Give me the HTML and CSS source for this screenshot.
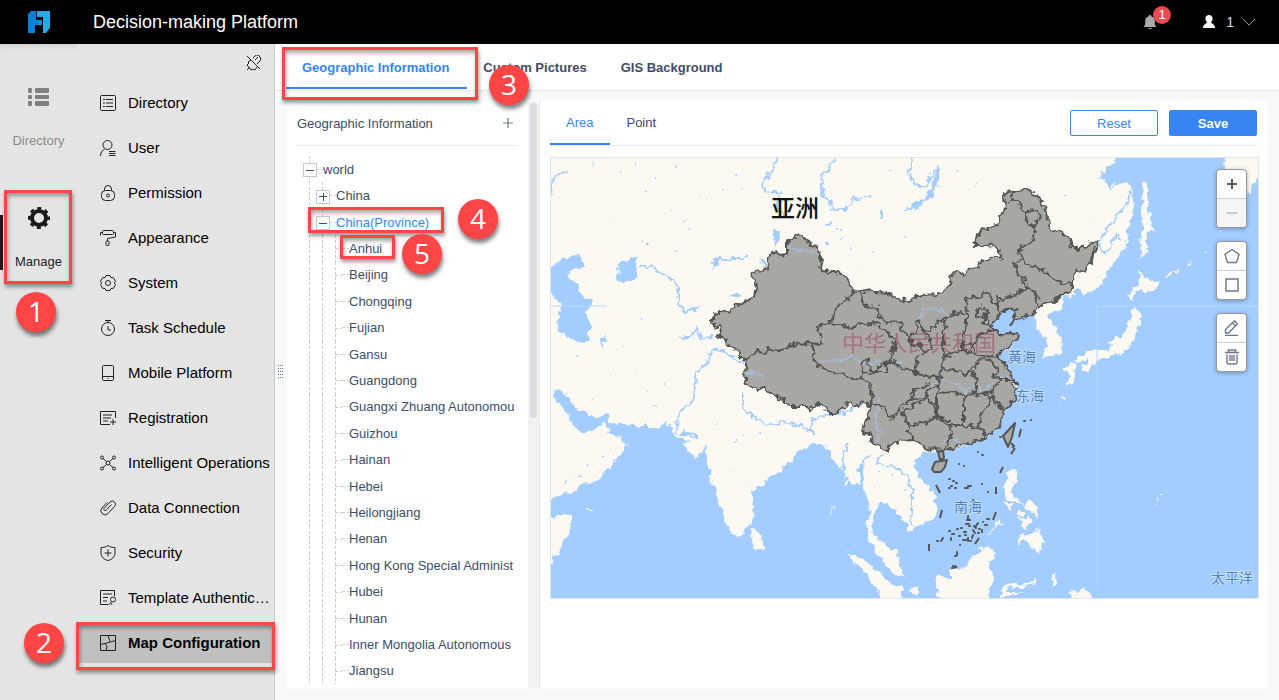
FILE: index.html
```html
<!DOCTYPE html>
<html lang="en">
<head>
    <meta charset="utf-8">
    <meta name="viewport" content="width=device-width, initial-scale=1">
    <title>Decision-making Platform</title>
    <link rel="stylesheet" href="styles.css">
</head>
<body>
    <header class="topbar">
        <svg class="logo" viewBox="0 0 22 22">
            <path d="M3 0h5v9h6v5H7v8H0V3z" fill="#0a7fd6"/>
            <path d="M9 0h13v17l-4 5h-3V6H9z" fill="#27aae1"/>
            <path d="M9 9h5v5l-5 0z" fill="#0a90d8"/>
        </svg>
        <h1>Decision-making Platform</h1>
        <div class="account">
            <button class="bell" aria-label="Messages">
                <svg viewBox="0 0 14 14"><path d="M7 0c.8 0 1.200.5 1.200 1.200C10.500 1.800 11.800 3.500 11.800 6v3.500L13.500 12H.5l1.700-2.500V6c0-2.500 1.300-4.200 3.600-4.800C5.800.5 6.200 0 7 0zM5 13h4l-1 1H6z" fill="#aaa"/></svg>
                <span class="badge">1</span>
            </button>
            <svg class="person" viewBox="0 0 12 14"><path d="M6 0a3.600 3.600 0 0 1 3.600 3.800c0 1.500-.8 2.700-1.600 3.500 0 1.200 4 1.700 4 5.700H0c0-4 4-4.500 4-5.700-.8-.8-1.600-2-1.600-3.500A3.600 3.600 0 0 1 6 0z" fill="#fff"/></svg>
            <span class="user-name">1</span>
            <svg class="chevron" viewBox="0 0 14 8"><path d="M1 1l6 6 6-6" fill="none" stroke="#999"/></svg>
        </div>
    </header>

    <div class="layout">
        <nav class="rail">
            <a href="#" class="rail-item">
                <svg viewBox="0 0 22 20" fill="#808080">
                    <rect x="0" y="0" width="4" height="5" rx="1"/><rect x="7" y="0" width="14" height="5" rx="1"/>
                    <rect x="0" y="7" width="4" height="4" rx="1"/><rect x="7" y="7" width="14" height="4" rx="1"/>
                    <rect x="0" y="13" width="4" height="5" rx="1"/><rect x="7" y="13" width="14" height="5" rx="1"/>
                </svg>
                Directory
            </a>
            <a href="#" class="rail-item active">
                <svg viewBox="0 0 22 22" fill="none" stroke="#1a1a1a">
                    <circle cx="11" cy="11" r="7" stroke-width="4"/>
                    <circle cx="11" cy="11" r="9" stroke-width="4" stroke-dasharray="3.600 3.470" stroke-dashoffset="1.800"/>
                </svg>
                Manage
                <span class="mark mark-manage"></span>
                <span class="step step-1">1</span>
            </a>
        </nav>

        <aside class="menu">
            <button class="pin" aria-label="Unpin menu">
                <svg class="line" viewBox="0 0 16 16"><path d="M1 1l13 13M7 3l2-2a3 3 0 0 1 5 1 3 3 0 0 1 0 4l-3 3M9 5l3-3M5 5L2 7l1 1-2 2 4 5 2-1 2 1 2-3M1 15l3-3"/></svg>
            </button>
            <ul>
                <li><a href="#"><svg class="line" viewBox="0 0 16 16"><rect x=".5" y=".5" width="15" height="15" rx="1"/><path d="M3 4.500h2M6 4.500h7M3 8h2M6 8h7M3 11.500h2M6 11.500h7"/></svg><span>Directory</span></a></li>
                <li><a href="#"><svg class="line" viewBox="0 0 16 16"><circle cx="7.500" cy="5" r="4.500"/><path d="M.5 16c0-3 1.500-5.500 4-6.800M9 11.500h6.500M9 13.500h6.500M9 15.500h6.500"/></svg><span>User</span></a></li>
                <li><a href="#"><svg class="line" viewBox="0 0 16 16"><path d="M4.500 5.500V4a3.500 3.500 0 0 1 7 0v1.500"/><rect x="1.500" y="5.500" width="13" height="10" rx="4"/><circle cx="8" cy="10.500" r="1.500"/></svg><span>Permission</span></a></li>
                <li><a href="#"><svg class="line" viewBox="0 0 16 16"><rect x="2.500" y=".5" width="11" height="4" rx="1"/><path d="M2 2.500H.5v3M13.500 2.500h2V7l-8 1.500V11"/><rect x="6" y="11" width="3" height="4.500" rx="1"/></svg><span>Appearance</span></a></li>
                <li><a href="#"><svg class="line" viewBox="0 0 16 16"><path d="M6 .5h4l1 2 2.500.3 2 3.500L14.300 8l1.200 1.700-2 3.500-2.500.3-1 2H6l-1-2-2.500-.3-2-3.500L1.700 8 .5 6.300l2-3.500L5 2.500z" stroke-linejoin="round"/><circle cx="8" cy="8" r="2.500"/></svg><span>System</span></a></li>
                <li><a href="#"><svg class="line" viewBox="0 0 16 16"><circle cx="8" cy="9" r="6.500"/><path d="M5 .5h6M8 .5v2M8 6v4h3"/></svg><span>Task Schedule</span></a></li>
                <li><a href="#"><svg class="line" viewBox="0 0 16 16"><rect x="2.500" y=".5" width="11" height="15" rx="1"/><path d="M3 11.500h10M7.500 13.500h1"/></svg><span>Mobile Platform</span></a></li>
                <li><a href="#"><svg class="line" viewBox="0 0 16 16"><path d="M15.500 8V1.500H.5v13H10M3 5h9M3 8h8M3 11h5M13 9v6M10 12h6"/></svg><span>Registration</span></a></li>
                <li><a href="#"><svg class="line" viewBox="0 0 16 16"><circle cx="2" cy="2.500" r="1.500"/><circle cx="14" cy="2.500" r="1.500"/><circle cx="2" cy="13.500" r="1.500"/><circle cx="14" cy="13.500" r="1.500"/><circle cx="8" cy="8" r="2"/><path d="M3 3.500l3.500 3M13 3.500l-3.500 3M3 12.500l3.500-3M13 12.500l-3.500-3"/></svg><span>Intelligent Operations</span></a></li>
                <li><a href="#"><svg class="line" viewBox="0 0 16 16"><path d="M11.500 4.500l-5.500 6a1.500 1.500 0 0 1-2-2l6-6.500a3 3 0 0 1 4.500 4.500l-6.500 7a4 4 0 0 1-6-5.500L7 2.500"/></svg><span>Data Connection</span></a></li>
                <li><a href="#"><svg class="line" viewBox="0 0 16 16"><path d="M8 .5c2 1.500 4 2 7 2V8c0 4-3 6.500-7 7.500C4 14.500 1 12 1 8V2.500C4 2.500 6 2 8 .5zM8 4.500v7M4.500 8h7"/></svg><span>Security</span></a></li>
                <li><a href="#"><svg class="line" viewBox="0 0 16 16"><path d="M14.500 6V.5H.5v14H8M3 4h9M3 7.500h5M3 11h4"/><circle cx="13" cy="9.500" r="2.500"/><path d="M11.500 11.500L8.500 15M11 13l1 2"/></svg><span>Template Authentication</span></a></li>
                <li class="selected">
                    <a href="#"><svg class="line" viewBox="0 0 16 16"><path d="M.5.5h15v15H.5zM8 .5l2 6M.5 9.500l10-2.500 5-1.500M5 8.500l2 3-1 4"/></svg><span>Map Configuration</span></a>
                    <span class="mark mark-menu"></span>
                    <span class="step step-2">2</span>
                </li>
            </ul>
        </aside>

        <div class="splitter"></div>

        <main class="content">
            <nav class="tabs">
                <a href="#" class="active">Geographic Information<span class="mark mark-tab"></span></a>
                <a href="#">Custom Pictures</a>
                <a href="#">GIS Background</a>
                <span class="step step-3">3</span>
            </nav>

            <div class="panels">
                <section class="tree-panel">
                    <div class="tree-body">
                        <div class="tree-head">
                            <h2>Geographic Information</h2>
                            <button class="add" aria-label="Add"><svg viewBox="0 0 10 10"><path d="M5 0v10M0 5h10" stroke="#6b788c" stroke-width="1.200"/></svg></button>
                        </div>
                        <ul class="tree">
                            <li><button class="toggle minus" aria-label="Collapse"></button><span class="dash"></span><span class="label">world</span></li>
                            <li><i></i><button class="toggle plus" aria-label="Expand"></button><span class="dash"></span><span class="label">China</span></li>
                            <li class="current"><i></i><button class="toggle minus" aria-label="Collapse"></button><span class="dash"></span><span class="label">China(Province)</span><span class="mark mark-province"></span><span class="step step-4">4</span></li>
                            <li><i></i><i></i><i class="leaf"></i><span class="dash"></span><span class="label">Anhui</span><span class="mark mark-anhui"></span><span class="step step-5">5</span></li>
                            <li><i></i><i></i><i class="leaf"></i><span class="dash"></span><span class="label">Beijing</span></li>
                            <li><i></i><i></i><i class="leaf"></i><span class="dash"></span><span class="label">Chongqing</span></li>
                            <li><i></i><i></i><i class="leaf"></i><span class="dash"></span><span class="label">Fujian</span></li>
                            <li><i></i><i></i><i class="leaf"></i><span class="dash"></span><span class="label">Gansu</span></li>
                            <li><i></i><i></i><i class="leaf"></i><span class="dash"></span><span class="label">Guangdong</span></li>
                            <li><i></i><i></i><i class="leaf"></i><span class="dash"></span><span class="label">Guangxi Zhuang Autonomou</span></li>
                            <li><i></i><i></i><i class="leaf"></i><span class="dash"></span><span class="label">Guizhou</span></li>
                            <li><i></i><i></i><i class="leaf"></i><span class="dash"></span><span class="label">Hainan</span></li>
                            <li><i></i><i></i><i class="leaf"></i><span class="dash"></span><span class="label">Hebei</span></li>
                            <li><i></i><i></i><i class="leaf"></i><span class="dash"></span><span class="label">Heilongjiang</span></li>
                            <li><i></i><i></i><i class="leaf"></i><span class="dash"></span><span class="label">Henan</span></li>
                            <li><i></i><i></i><i class="leaf"></i><span class="dash"></span><span class="label">Hong Kong Special Administ</span></li>
                            <li><i></i><i></i><i class="leaf"></i><span class="dash"></span><span class="label">Hubei</span></li>
                            <li><i></i><i></i><i class="leaf"></i><span class="dash"></span><span class="label">Hunan</span></li>
                            <li><i></i><i></i><i class="leaf"></i><span class="dash"></span><span class="label">Inner Mongolia Autonomous</span></li>
                            <li><i></i><i></i><i class="leaf"></i><span class="dash"></span><span class="label">Jiangsu</span></li>
                        </ul>
                    </div>
                    <div class="scrollbar"><div class="thumb"></div></div>
                </section>

                <section class="map-panel">
                    <div class="map-head">
                        <a href="#" class="active">Area</a>
                        <a href="#">Point</a>
                        <div class="actions">
                            <button class="btn">Reset</button>
                            <button class="btn primary">Save</button>
                        </div>
                    </div>
                    <div class="map">
                        <svg class="map-svg" viewBox="551 158 707 440">
                            <!-- roughens coastlines and borders -->
                            <filter id="rough" x="551" y="158" width="707" height="440" filterUnits="userSpaceOnUse" color-interpolation-filters="sRGB">
                                <feTurbulence type="fractalNoise" baseFrequency="0.16" numOctaves="2" seed="4"/>
                                <feDisplacementMap in="SourceGraphic" scale="9" xChannelSelector="R" yChannelSelector="G"/>
                            </filter>
                            <rect class="sea" x="551" y="158" width="707" height="440"/>
                            <!-- land -->
                            <g class="land" filter="url(#rough)">
                                <path d="M540 140H1116V158L1112 165 1106 168 1099 177 1107 182 1109 188 1122 183 1128 184 1133 188 1132 196 1134 205 1131 222 1126 238 1124 250 1117 260 1108 272 1100 285 1093 291 1085 293 1078 288 1073 295 1064 297 1062 307 1054 313 1047 317 1053 324 1057 330 1062 340 1061 352 1050 356 1043 357 1045 349 1048 343 1043 337 1037 327 1033 317 1040 307 1012 323 1017 308 1007 310 990 325 995 330 1000 338 1008 333 1019 335 1017 339 1003 352 997 355 1007 367 1015 380 1018 390 1013 403 1002 415 1000 427 983 440 963 447 947 451 938 453 927 452 918 458 913 462 914 469 921 480 927 487 934 496 937 507 936 516 928 520 920 525 913 530 908 533 907 522 900 517 893 507 885 503 878 505 875 515 870 523 873 533 883 543 890 547 898 553 900 566 903 578 899 577 888 568 882 558 877 553 871 543 868 537 867 527 870 514 868 503 866 495 863 487 864 474 863 460 857 470 860 483 852 485 849 480 843 487 845 478 842 468 833 460 830 452 825 447 813 443 806 448 797 452 793 462 787 463 780 470 770 478 763 485 753 491 753 505 752 522 743 532 737 537 730 532 725 520 717 497 710 477 707 460 705 443 703 452 695 456 685 448 683 443 690 441 678 438 673 433 667 423 660 426 643 426 625 424 610 422 607 413 598 417 590 416 582 410 575 407 570 397 561 391 555 390 554 397 562 408 568 417 577 432 590 432 599 427 605 420 607 429 618 436 626 445 621 455 613 463 605 472 597 480 588 483 580 485 574 491 563 495 551 499 540 500z"/>
                                <path d="M540 520L551 518 573 513 570 530 562 545 551 562 540 575zM752 527L759 533 764 541 763 549 754 550 751 540zM587 509h6v1h-6z"/>
                                <path d="M848 553L856 555 864 560 872 568 883 574 891 583 901 586 904 610H884L877 590 868 575 860 566 852 561zM909 589L920 587 920 593 914 596z"/>
                                <path d="M950 570L963 568 973 557 983 547 989 547 997 555 988 560 990 570 995 580 990 587 988 610H938L935 577 940 575 950 580z"/>
                                <path d="M1007 470L1016 471 1018 480 1012 490 1013 498 1020 500 1024 506 1015 502 1006 499 1003 487 1006 485zM1006 502l5 3 1 6-4-2zM1018 508l6 4-2 5-5-2zM1028 499l9 9 1 10-5-6-5-1-3-6zM1018 518l7 1 6-4-2 12-5 2-3-6zM1017 546L1019 538 1026 535 1032 535 1037 530 1043 541 1042 549 1038 553 1031 547 1024 540zM985 535l15-15 2 2-14 12z"/>
                                <path d="M1001 594L1004 586 1012 583 1030 584 1036 577 1035 585 1024 588 1007 586 1006 592 1023 592 1010 598H1001zM1051 575l5-3-2 7 3 2-4 9zM1068 591l12-1 12 3v12h-17z"/>
                                <path d="M1131 307L1137 308 1141 316 1138 330 1133 338 1129 349 1124 352 1122 357 1115 354 1106 358 1098 361 1090 366 1088 359 1077 363 1075 360 1082 355 1088 351 1097 350 1107 350 1111 347 1110 341 1115 339 1120 337 1127 328 1131 318zM1065 367L1072 362 1077 367 1075 376 1072 384 1068 382 1070 375 1064 371zM1081 367L1095 363 1091 368 1083 372zM1138 270L1145 277 1155 283 1162 281 1157 287 1150 293 1140 291 1133 294 1135 298 1129 302 1129 295 1134 288 1139 285z"/>
                                <path d="M1142 182L1147 183 1147 195 1149 210 1152 224 1155 233 1149 231 1146 238 1148 249 1142 258 1141 245 1143 225 1140 210 1143 198zM1227 140H1270V178H1258L1253 186 1251 194 1244 190 1232 180 1224 167z"/>
                                <path d="M1151 281l4-1-2 3zM1165 276l6-3 1 1-5 4zM1172 274l5-5 3-1-4 5zM1187 266l6-4-3 5zM1203 255l3-3-1 3zM1220 229h1v4h-1zM1062 398l2-4 1 5zM1059 404l2 1-2 2zM1161 493h2v1h-2zM1158 498h2v1h-2zM1155 504h2v1h-2zM832 504l1 4-2 8zM830 520h2v1h-2zM838 544h1v2h-1z"/>
                            </g>
                            <!-- lakes and rivers -->
                            <g class="lake" filter="url(#rough)">
                                <path d="M540 267H551L560 260 573 255 583 257 583 268 573 269 567 276 574 280 577 287 583 298 590 299 593 306 586 309 583 313 589 318 589 341 578 342 560 333 558 318 562 307 551 292 540 290z"/>
                                <path d="M618 265L625 260 637 256 635 264 638 273 632 281 628 283 617 281zM713 270L712 263 716 257 747 257 747 259 720 260zM757 258l9 5 0 4zM730 296l9-4 2 2-5 3z"/>
                                <path d="M902 210L913 205 924 199 931 189 934 179 938 165 940 168 937 184 934 194 926 201 917 208zM600 340l6-5-3 12zM773 229l6 2-1 11-3 4zM826 222l5-2 1 5-5 1zM880 211h2v8h-2z"/>
                                <path d="M680 432l17 1v4l-17-1z"/>
                                <path class="dots" d="M558 165h1M572 180h1M620 172h1M655 177h1M675 168h1M692 185h1M707 200h1M683 222h2M640 240h1M648 245h2M612 220h1M670 210h1M690 230h1M740 190h1M735 175h2M563 206h1M634 163h2M700 195h1M722 190h2M645 192h1M606 196h1M592 163h1M677 250h1M765 190h1M832 204h1M840 238h2M852 250h1M862 270h1M826 245h2M838 229h2M890 170h1M905 237h1M871 252h1M958 172h1M975 186h1M1052 182h1M1065 195h1M1090 220h1M646 392h1M662 385h1M690 378h1M625 347h1M636 372h1M655 406h1M610 375h1M592 398h1M577 358h1M640 320h1M602 457h1M598 470h1M587 465h1M572 476h1M610 448h1M565 482h1M580 477h1M725 437h1M735 440h1M744 435h1M748 483h1M732 470h1M715 425h1M760 432h1M880 470h1M892 475h1M875 488h1M905 490h1"/>
                            </g>
                            <g class="river" filter="url(#rough)">
                                <path d="M566 170l-8 3-7 10v15M637 266l15 0 10 8 12 7 4 7v15l8 9 14-5M680 338l12-2 5-8 4 12 13-4M777 158l-4 12-12 16 10 6h9l-3 16 8 6M835 158l-7 12-7 5 3 22 7 4 1 9h14l7-10 15-4M912 158l-2 15 5 13 12 0 8-16M676 432l3-20 15-14 2-22 12-15 3-10 13-1 12 10 9 5M742 390v16l16 14 12 5 14-3 16 3 12 8v-14l18-4 18-4 16-8M1122 240l-6-6-11 20-7-10 18-28 10-11 5-14M870 456l-9 8 3 14-3 20M848 443l-5 14 2 24M883 452l-6 12 20 3 10 9 5 15v24l-4 3 4 8"/>
                            </g>
                            <path class="grid" d="M551 306h55M1097 306h161M1097 306v282"/>
                            <!-- sea labels -->
                            <text class="sea-name" x="1008" y="362">黄海</text>
                            <text class="sea-name" x="1016" y="401">东海</text>
                            <text class="sea-name" x="954" y="512">南海</text>
                            <text class="sea-name" x="1211" y="583">太平洋</text>
                            <!-- provinces -->
                            <path class="region" filter="url(#rough)" d="M712 320L715 314 725 310 730 312 735 305 743 304 754 296 757 286 752 273 760 271 768 269 767 263 772 251 778 255 787 254 787 242 795 238 797 233 801 234 807 242 815 246 822 258 820 268 823 271 833 272 840 274 847 278 849 283 855 292 860 291 888 293 898 299 908 301 922 295 938 294 952 283 949 277 953 272 962 274 970 268 978 267 982 261 1002 257 1000 252 993 245 983 247 975 247 975 243 982 228 988 230 998 223 1000 217 1007 206 1003 197 1008 192 1017 190 1027 189 1032 193 1040 197 1044 207 1047 213 1051 230 1062 232 1070 238 1072 248 1082 248 1097 241 1095 247 1092 260 1084 271 1077 270 1072 277 1073 288 1068 293 1055 300 1053 303 1045 302 1040 307 1030 315 1020 319 1012 324 1016 313 1015 309 1007 310 998 318 990 325 996 330 1002 337 1008 333 1019 335 1018 339 1008 344 1003 350 997 357 1005 362 1008 372 1015 380 1013 385 1017 390 1015 400 1003 412 1000 426 990 434 983 440 963 445 943 451 925 449 920 442 913 440 901 441 888 445 888 453 882 448 873 445 870 434 862 432 864 423 869 418 868 405 860 403 858 408 850 402 837 413 828 413 825 407 815 404 809 411 807 406 790 406 782 400 773 395 762 387 758 391 747 383 743 375 747 370 744 359 741 357 741 351 728 347 727 341 718 337 721 332 718 326 712 323z"/>
                            <path class="region" d="M932 469L935 462 947 460 945 467 941 472 934 472zM1003 436L1015 423 1012 437 1008 447zM938 452l5-1 1 7-4 2z"/>
                            <path class="river" filter="url(#rough)" opacity=".5" d="M789 246l17 7 10-2M747 374l14-1 2 8M820 366v-6l20 1 12-5 12 8 10-2 18 2 10-2M920 320l3-12 17 1 10 8M928 387l14-8 12 4 12 9 8-6 10 5 14-15 14 4M880 395l-5 28 6 8-4 10M944 440l12-1 4 7"/>
                            <text class="country" x="842" y="351">中华人民共和国</text>
                            <g class="border" filter="url(#rough)">
                                <path d="M744 359L752 357 755 351 767 352 768 349 778 351 790 347 792 344 812 343 822 345 820 340 822 335 817 330 817 327 828 323 832 320 833 310 843 303 852 297 854 292M813 343V355L817 366 830 371 843 373 852 379 862 377 863 370 862 362 867 361 873 372 887 372 886 366 890 360 895 347 893 338 887 332 877 323 867 325 860 322 853 329 843 325 828 323M862 377L868 383 872 392 871 402 868 405"/>
                                <path d="M860 291L863 303 870 308 878 307 877 315 888 324 902 320 900 330 910 337 912 345 918 349M911 335L917 328 915 323 920 320 922 330 930 340 932 350 923 353 920 343 914 345M922 330L930 332 936 323 947 317 943 330 943 357 942 367M947 317L955 313 967 312 967 323 963 333 963 350 953 353 943 357M967 312L965 303 968 297 977 298 988 293 993 303 1000 308 998 318M995 305L998 297 1003 299 1013 295 1025 290 1027 287 1035 293 1036 300 1040 307M1027 287L1023 278 1018 277 1017 267 1013 263 1023 260 1020 255 1018 250 1032 242 1035 230 1028 223 1025 213 1018 202 1012 202 1013 193M1007 201L1012 202M1023 260L1027 266 1042 268 1050 277 1062 283 1072 282 1073 288M1025 213L1038 210 1040 215 1035 227 1027 223"/>
                                <path d="M975 315L980 307 988 311 985 318zM983 314L988 316 989 325 983 325zM963 344L973 345 977 340 983 333 995 330M973 345L975 354 984 356 997 357M963 350L973 354M942 367L950 371 960 373 970 373 977 380 972 370 977 362 985 358 993 363 998 370 993 375 1003 380 1015 380M1001 382L993 388 988 394 977 393 977 380M993 388L992 398 1003 410M942 367L940 378 930 377 913 372 918 363 917 357 923 353M862 372L873 374 883 363 893 362 902 368 913 372M930 377L927 387 913 390 912 400 900 407 897 417 890 418 882 407 873 403 870 390M930 377L940 380 937 387 928 390 925 397 912 400M940 380L938 393 953 392 967 395 977 393"/>
                                <path d="M902 411L915 405 927 398 935 407 938 417 923 423 910 427 905 417zM937 393L937 417 948 425 963 425 963 403 967 395M963 425L978 427 982 413 992 403 988 394M978 427L983 430 983 440M948 425L952 431 945 449M910 427L906 432 913 436 913 440M938 417L950 420M890 360L885 367M884 363L888 369M1012 378L1017 384M950 421L938 419"/>
                            </g>
                            <path class="border" d="M1021 429l-2 8M1015 448l-4 6M1003 467l-3 6M996 487v7M996 512l-3 8M979 538l-4 6M929 544v7M942 510l-2 8M936 485l4 8M1011 443l3 3-2 2"/>
                            <path class="isles" d="M1024 421h1M1031 420h.1M978 452h.1M982 455h1M959 464h.1M964 466h.1M949 479h1M953 481h1M956 483h1M951 486h1M955 488h1M949 488h1M965 488h3M968 486h3M982 484h.1M988 492h.1M973 500h.1M1000 437h1M968 516v3M967 520h3M966 524h3M969 526h1M974 526l2 2M978 523l-2 3M983 522h.1M987 519h2M973 530l2 3M979 529h1M982 530v2M961 528h1M964 532h2M957 529h1M952 534h2M949 531h1M951 538v2M959 536h1M965 535h1M968 538v3M963 540h3M970 541h1M973 535l-1 3M943 538l-2 3M937 541h1M960 545h.1M957 552v3M955 556h1M953 566l4 1-5 1M978 533h1M985 525h2"/>
                            <text class="continent" x="771" y="217">亚洲</text>
                        </svg>
                        <div class="map-tools">
                            <div class="tool-group">
                                <button aria-label="Zoom in"><svg viewBox="0 0 16 16"><path d="M3 8h10M8 3v10" stroke="#333" stroke-width="1.600"/></svg></button>
                                <button aria-label="Zoom out" disabled><svg viewBox="0 0 16 16"><path d="M3 8h10" stroke="#bbb" stroke-width="1.600"/></svg></button>
                            </div>
                            <div class="tool-group">
                                <button aria-label="Draw polygon"><svg class="tool" viewBox="0 0 16 16"><path d="M8 1.500l7 5-2.500 8h-9L1 6.500z"/></svg></button>
                                <button aria-label="Draw rectangle"><svg class="tool" viewBox="0 0 16 16"><path d="M2 2h12v12H2z"/></svg></button>
                            </div>
                            <div class="tool-group">
                                <button aria-label="Edit"><svg class="tool" viewBox="0 0 16 16"><path d="M1.500 13v-3.500L10.500.8l3 3L4.500 13zM8.500 3l3 3M1 15.500h13"/></svg></button>
                                <button aria-label="Delete"><svg class="tool" viewBox="0 0 16 16"><path d="M1 3.500h14M4.500 3V1h7v2M3 5.500v8q0 1.500 1.500 1.500h7q1.500 0 1.500-1.500v-8M6 6v6M8 6v6M10 6v6"/></svg></button>
                            </div>
                        </div>
                    </div>
                </section>
            </div>
        </main>
    </div>
</body>
</html>
```
FILE: styles.css
```css
* {
    box-sizing: border-box;
}
body {
    margin: 0;
    height: 100vh;
    display: flex;
    flex-direction: column;
    overflow: hidden;
    font-family: "Liberation Sans", Arial, sans-serif;
    font-size: 13px;
    color: #3d4d66;
    background-color: #f7f9fb;
}
a {
    color: inherit;
    text-decoration: none;
}
ul {
    list-style: none;
    margin: 0;
    padding: 0;
}
button {
    font: inherit;
    color: inherit;
    background: none;
    border: none;
    padding: 0;
    cursor: pointer;
}
svg {
    display: block;
}

/* top bar */
.topbar {
    display: flex;
    align-items: center;
    height: 44px;
    flex: none;
    padding: 0 23px 0 28px;
    background-color: #000;
    color: #fff;
}
.logo {
    width: 22px;
    height: 22px;
}
.topbar h1 {
    margin: 0 0 0 43px;
    font-size: 18px;
    font-weight: normal;
}
.account {
    display: flex;
    align-items: center;
    margin-left: auto;
}
.bell {
    position: relative;
    margin-right: 45px;
}
.bell svg,
.person {
    width: 14px;
    height: 14px;
}
.badge {
    position: absolute;
    left: 10px;
    top: -9px;
    width: 18px;
    height: 18px;
    border-radius: 9px;
    background-color: #e84c4f;
    color: #fff;
    font-size: 13px;
    line-height: 18px;
    text-align: center;
}
.user-name {
    margin: 0 8px 0 10px;
    font-size: 14px;
    color: #ddd;
}
.chevron {
    width: 14px;
    height: 8px;
}

/* left side */
.layout {
    flex: 1;
    min-height: 0;
    display: flex;
}
.rail {
    width: 77px;
    flex: none;
    background-color: #e4e4e4;
    padding-top: 44px;
    box-shadow: inset 0 8px 8px -8px rgba(0,0,0,0.15);
}
.rail-item {
    position: relative;
    display: flex;
    flex-direction: column;
    align-items: center;
    justify-content: space-between;
    height: 61px;
    font-size: 13px;
    line-height: 16px;
    color: #8a8a8a;
}
.rail-item svg {
    width: 22px;
    height: 20px;
}
.rail-item.active {
    height: 55px;
    margin-top: 66px;
    padding-right: 3px;
    border-left: 3px solid #1a1a1a;
    color: #222;
}
.rail-item.active svg {
    height: 22px;
    margin-top: -8px;
}
.menu {
    width: 198px;
    flex: none;
    background-color: #e4e4e4;
    border-right: 1px solid #c8c8c8;
    padding-top: 11px;
}
.pin {
    display: block;
    margin: 0 12px 11px auto;
}
.line {
    width: 16px;
    height: 16px;
    flex: none;
    fill: none;
    stroke: #222;
    stroke-width: 1;
}
.menu li {
    position: relative;
    height: 41px;
    margin-bottom: 4px;
}
.menu li a {
    display: flex;
    align-items: center;
    gap: 12px;
    height: 100%;
    padding-left: 23px;
    font-size: 15px;
    color: #000;
}
.menu li a span {
    overflow: hidden;
    white-space: nowrap;
    text-overflow: ellipsis;
}
.menu .selected {
    background-color: #c0c0c0;
    font-weight: bold;
}
.splitter {
    position: relative;
    width: 11px;
    flex: none;
    border-top: 46px solid #fff;
}
.splitter::before {
    content: "";
    display: block;
    height: 1px;
    background-color: #e3e6ea;
}
/* drag handle */
.splitter::after {
    content: "";
    position: absolute;
    left: 3px;
    top: 275px;
    width: 5px;
    height: 15px;
    background: linear-gradient(90deg, #6b788c 1px, transparent 1px) 0 0 / 2px 3px;
    mask: repeating-linear-gradient(#000 0 1px, transparent 1px 3px);
}

/* content */
.content {
    flex: 1;
    min-width: 0;
    display: flex;
    flex-direction: column;
}
.tabs {
    position: relative;
    display: flex;
    height: 47px;
    flex: none;
    background-color: #fff;
    border-bottom: 1px solid #e3e6ea;
    font-weight: bold;
}
.tabs a {
    position: relative;
    height: 45px;
    padding: 0 18px 0 16px;
    line-height: 48px;
}
.tabs .active {
    color: #3685f2;
    border-bottom: 2px solid #3685f2;
}
.panels {
    flex: 1;
    min-height: 0;
    display: flex;
    padding: 10px 11px 11px 0;
}
.tree-panel {
    display: flex;
    width: 254px;
    flex: none;
    background-color: #fff;
    border-right: 1px solid #e3e6ea;
}
.tree-body {
    flex: 1;
    min-width: 0;
    display: flex;
    flex-direction: column;
    padding: 0 11px;
}
.tree-head {
    display: flex;
    align-items: center;
    justify-content: space-between;
    height: 45px;
    flex: none;
    padding-right: 4px;
    border-bottom: 1px solid #e6e9ed;
}
.tree-head h2 {
    margin: 0;
    font-size: 13px;
    font-weight: normal;
}
.add svg {
    width: 10px;
    height: 10px;
}
.tree {
    flex: 1;
    display: flex;
    flex-direction: column;
    padding: 10px 0 5px 6px;
}
.tree li {
    position: relative;
    flex: 1;
    display: flex;
    align-items: center;
}
.tree li i,
.toggle {
    position: relative;
    width: 13px;
    align-self: stretch;
    flex: none;
    background: repeating-linear-gradient(#c8cdd5 0 3px, transparent 3px 5px) 6px 0 / 1px 100% no-repeat;
}
.tree li i.leaf::after,
.dash {
    width: 7px;
    height: 1px;
    flex: none;
    background: repeating-linear-gradient(90deg, #c8cdd5 0 3px, transparent 3px 5px);
}
.tree li i.leaf::after {
    content: "";
    position: absolute;
    left: 6px;
    top: 50%;
}
.toggle::before {
    content: "";
    position: absolute;
    left: 0;
    top: calc(50% - 6px);
    width: 12px;
    height: 12px;
    border: 1px solid #c3c9d2;
    background: linear-gradient(#3d4d66, #3d4d66) center / 8px 1px no-repeat #fff;
}
.toggle.plus::before {
    background: linear-gradient(#3d4d66, #3d4d66) center / 8px 1px no-repeat, linear-gradient(#3d4d66, #3d4d66) center / 1px 8px no-repeat #fff;
}
.label {
    overflow: hidden;
    white-space: nowrap;
}
.current .label {
    color: #3685f2;
}
.scrollbar {
    width: 11px;
    background-color: #f2f2f3;
    border-radius: 5px;
    padding: 2px;
}
.thumb {
    height: 54%;
    border-radius: 4px;
    background-color: #dcdde2;
}

/* map */
.map-panel {
    flex: 1;
    min-width: 0;
    background-color: #fff;
    padding: 0 9px 0 10px;
}
.map-head {
    display: flex;
    height: 45px;
    margin-right: 2px;
    border-bottom: 1px solid #e6e9ed;
}
.map-head a {
    padding: 0 17px 0 16px;
    height: 44px;
    line-height: 43px;
}
.map-head .active {
    color: #3685f2;
    border-bottom: 2px solid #3685f2;
}
.actions {
    display: flex;
    gap: 11px;
    margin: 9px 0 0 auto;
}
.btn {
    width: 88px;
    height: 26px;
    border: 1px solid #3685f2;
    border-radius: 2px;
    color: #3685f2;
}
.btn.primary {
    background-color: #3685f2;
    color: #fff;
    font-weight: bold;
}
.map {
    position: relative;
    margin-top: 11px;
    border: 1px solid #e3e5e8;
}
.map-svg {
    width: 100%;
    height: auto;
}
.sea,
.lake {
    fill: #a3ccff;
}
.land {
    fill: #fcf9f2;
}
.dots {
    fill: none;
    stroke: #a3ccff;
    stroke-width: 2;
}
.river {
    fill: none;
    stroke: #a3ccff;
    stroke-width: 2;
}
.grid {
    fill: none;
    stroke: #b9d8ff;
    stroke-width: 1;
}
.region {
    fill: #a8a7a3;
    stroke: #555;
    stroke-width: 2;
    stroke-linejoin: round;
}
.border {
    fill: none;
    stroke: #555;
    stroke-width: 2;
    stroke-linejoin: round;
}
.isles {
    fill: none;
    stroke: #555;
    stroke-width: 2;
    stroke-linecap: round;
}
.map text {
    font-family: "Noto Sans CJK SC", sans-serif;
}
.map .continent {
    font-size: 24px;
    font-weight: 500;
    fill: #111;
}
.map .country {
    font-size: 22px;
    fill: #a5727c;
}
.map .sea-name {
    font-size: 14px;
    fill: #4f85c2;
    stroke: #c5dfff;
    stroke-width: 2;
    paint-order: stroke;
}
.map-tools {
    position: absolute;
    top: 11px;
    right: 11px;
    display: flex;
    flex-direction: column;
    gap: 13px;
}
.tool-group {
    width: 31px;
    border: 1px solid #999;
    border-radius: 4px;
    background-color: #fff;
    box-shadow: 0 1px 4px rgba(0,0,0,0.3);
    overflow: hidden;
}
.tool-group button {
    display: flex;
    align-items: center;
    justify-content: center;
    width: 100%;
    height: 28px;
}
.tool-group button + button {
    height: 29px;
    border-top: 1px solid #ccc;
}
.tool-group button:disabled {
    background-color: #f4f4f4;
}
.tool-group svg {
    width: 16px;
    height: 16px;
}
.tool {
    fill: none;
    stroke: #6b788c;
    stroke-width: 1.4;
}

/* tutorial marks over the page */
.mark {
    position: absolute;
    z-index: 2;
    border: 3px solid #ff4545;
    box-shadow: 1px 3px 4px rgba(0,0,0,0.4), inset 1px 3px 4px rgba(0,0,0,0.35);
    pointer-events: none;
}
.step {
    position: absolute;
    z-index: 3;
    width: 40px;
    height: 40px;
    border-radius: 50%;
    background-color: #ff4545;
    box-shadow: 1px 4px 4px rgba(0,0,0,0.5);
    color: #fff;
    font-family: "Open Sans", sans-serif;
    font-size: 28px;
    font-weight: normal;
    line-height: 38px;
    text-align: center;
}
.mark-manage {
    left: 1px;
    top: -25px;
    width: 68px;
    height: 94px;
}
.step-1 {
    left: 13px;
    top: 77px;
}
.mark-menu {
    left: -1px;
    top: 0;
    width: 199px;
    height: 48px;
}
.step-2 {
    left: -53px;
    top: 1px;
}
.mark-tab {
    left: -4px;
    top: 3px;
    width: 196px;
    height: 53px;
}
.step-3 {
    left: 203px;
    top: 21px;
}
.mark-province {
    left: 5px;
    top: -2px;
    width: 136px;
    height: 26px;
}
.step-4 {
    left: 155px;
    top: -10px;
}
.mark-anhui {
    left: 37px;
    top: 0;
    width: 55px;
    height: 24px;
}
.step-5 {
    left: 99px;
    top: -1px;
}
```
